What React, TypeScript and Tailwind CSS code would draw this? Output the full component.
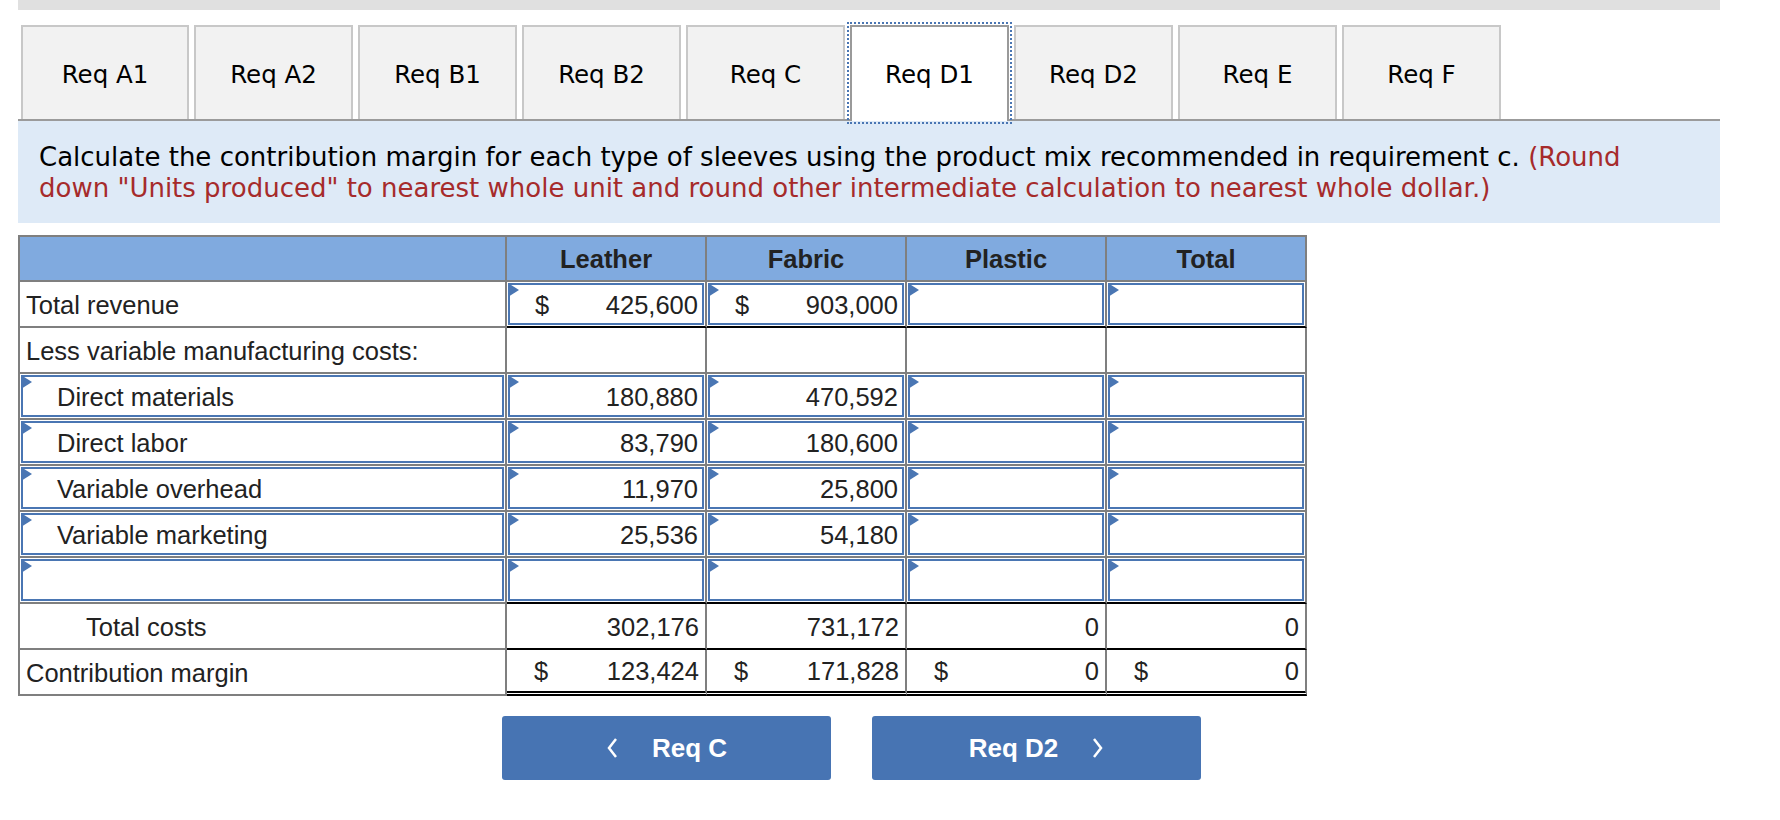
import React from 'react';

const tabs = ['Req A1', 'Req A2', 'Req B1', 'Req B2', 'Req C', 'Req D1', 'Req D2', 'Req E', 'Req F'];
const activeTab = 'Req D1';

type Cell = { input?: boolean; dollar?: boolean; value?: string };
type Row = {
  label: string;
  labelInput?: boolean;
  indent?: 'none' | 'one' | 'two';
  cells: Cell[];
  line?: 'single' | 'double';
};

const rows: Row[] = [
  {
    label: 'Total revenue',
    cells: [
      { input: true, dollar: true, value: '425,600' },
      { input: true, dollar: true, value: '903,000' },
      { input: true },
      { input: true },
    ],
    line: 'single',
  },
  { label: 'Less variable manufacturing costs:', cells: [{}, {}, {}, {}] },
  {
    label: 'Direct materials',
    labelInput: true,
    cells: [{ input: true, value: '180,880' }, { input: true, value: '470,592' }, { input: true }, { input: true }],
  },
  {
    label: 'Direct labor',
    labelInput: true,
    cells: [{ input: true, value: '83,790' }, { input: true, value: '180,600' }, { input: true }, { input: true }],
  },
  {
    label: 'Variable overhead',
    labelInput: true,
    cells: [{ input: true, value: '11,970' }, { input: true, value: '25,800' }, { input: true }, { input: true }],
  },
  {
    label: 'Variable marketing',
    labelInput: true,
    cells: [{ input: true, value: '25,536' }, { input: true, value: '54,180' }, { input: true }, { input: true }],
  },
  {
    label: '',
    labelInput: true,
    cells: [{ input: true }, { input: true }, { input: true }, { input: true }],
    line: 'single',
  },
  {
    label: 'Total costs',
    indent: 'two',
    cells: [{ value: '302,176' }, { value: '731,172' }, { value: '0' }, { value: '0' }],
    line: 'single',
  },
  {
    label: 'Contribution margin',
    cells: [
      { dollar: true, value: '123,424' },
      { dollar: true, value: '171,828' },
      { dollar: true, value: '0' },
      { dollar: true, value: '0' },
    ],
    line: 'double',
  },
];

function Flag() {
  return (
    <svg className="absolute -left-[2px] -top-[2px]" width="11" height="14" viewBox="0 0 11 14">
      <polygon points="0,0 11,7 0,14" fill="#4a76b3" />
    </svg>
  );
}

function NumberCell({ cell, line }: { cell: Cell; line?: Row['line'] }) {
  const border =
    line === 'double'
      ? 'border-b-[5px] border-b-black border-double'
      : line === 'single'
      ? 'border-b-2 border-b-black'
      : 'border-b-2 border-b-[#7f7f7f]';

  const content = (
    <>
      <span>{cell.dollar ? '$' : ''}</span>
      <span>{cell.value ?? ''}</span>
    </>
  );

  return (
    <div className={`h-full w-[200px] border-r-2 border-r-[#7f7f7f] ${border}`}>
      {cell.input ? (
        <div className="relative m-[1px] flex h-[calc(100%-2px)] items-center justify-between border-2 border-[#4a76b3] pl-[25px] pr-[4px] pt-[2px]">
          <Flag />
          {content}
        </div>
      ) : (
        <div className="flex h-full items-center justify-between pl-[27px] pr-[6px] pt-[2px]">{content}</div>
      )}
    </div>
  );
}

export default function App() {
  return (
    <div className="min-h-screen bg-white pl-[18px]">
      <div className="w-[1702px]">
        <div className="h-[10px] bg-[#e0e0e0]" />

        <div className="mt-[15px] flex border-b-2 border-[#9b9b9b] pl-[3px] font-['DejaVu_Sans',Verdana,sans-serif] text-[24.5px] text-black">
          {tabs.map((t, i) => {
            const isActive = t === activeTab;
            return (
              <div
                key={t}
                className={`flex items-center justify-center pt-[4px] ${i === 0 ? 'w-[168px]' : 'ml-[5px] w-[159px]'} ${
                  isActive
                    ? 'relative z-10 -mb-[2px] h-[96px] border-x-2 border-t-2 border-[#9a9a9a] bg-white pb-[2px] outline-2 outline-offset-1 outline-dotted outline-[#4a76b3]'
                    : 'h-[94px] border-x-2 border-t-2 border-[#c8c8c8] bg-[#f2f2f2]'
                }`}
              >
                {t}
              </div>
            );
          })}
        </div>

        <div className="bg-[#deeaf7] px-[21px] pt-[21px] pb-[19px] font-['DejaVu_Sans',Verdana,sans-serif] text-[26px] leading-[31px] text-black">
          Calculate the contribution margin for each type of sleeves using the product mix recommended in requirement c.{' '}
          <span className="text-[#a62b2b]">
            (Round
            <br />
            down "Units produced" to nearest whole unit and round other intermediate calculation to nearest whole dollar.)
          </span>
        </div>

        <div className="mt-[12px] w-[1289px] border-l-2 border-t-2 border-[#7f7f7f] font-['Liberation_Sans',Arial,sans-serif] text-[25.5px] text-[#222]">
          <div className="flex h-[45px] bg-[#80aadf] font-bold">
            <div className="h-full w-[487px] border-b-2 border-r-2 border-[#7f7f7f]" />
            {['Leather', 'Fabric', 'Plastic', 'Total'].map((h) => (
              <div key={h} className="flex h-full w-[200px] items-center justify-center border-b-2 border-r-2 border-[#7f7f7f] pt-[2px]">
                {h}
              </div>
            ))}
          </div>

          {rows.map((r, idx) => (
            <div key={idx} className="flex h-[46px]">
              <div className="h-full w-[487px] border-b-2 border-r-2 border-[#7f7f7f]">
                {r.labelInput ? (
                  <div className="relative m-[1px] flex h-[calc(100%-2px)] items-center border-2 border-[#4a76b3] pl-[34px] pt-[2px]">
                    <Flag />
                    {r.label}
                  </div>
                ) : (
                  <div className={`flex h-full items-center pt-[2px] ${r.indent === 'two' ? 'pl-[66px]' : 'pl-[6px]'}`}>{r.label}</div>
                )}
              </div>
              {r.cells.map((c, j) => (
                <NumberCell key={j} cell={c} line={r.line} />
              ))}
            </div>
          ))}
        </div>

        <div className="mt-[20px] ml-[484px] flex gap-[41px] font-['Liberation_Sans',Arial,sans-serif] text-[26px] font-bold text-white">
          <button className="flex h-[64px] w-[329px] items-center justify-center gap-[34px] rounded-[3px] bg-[#4774b3]">
            <svg width="12" height="22" viewBox="0 0 12 22">
              <polyline points="10,2 3,11 10,20" fill="none" stroke="white" strokeWidth="2.5" />
            </svg>
            <span>Req C</span>
          </button>
          <button className="flex h-[64px] w-[329px] items-center justify-center gap-[34px] rounded-[3px] bg-[#4774b3]">
            <span>Req D2</span>
            <svg width="12" height="22" viewBox="0 0 12 22">
              <polyline points="2,2 9,11 2,20" fill="none" stroke="white" strokeWidth="2.5" />
            </svg>
          </button>
        </div>
      </div>
    </div>
  );
}
